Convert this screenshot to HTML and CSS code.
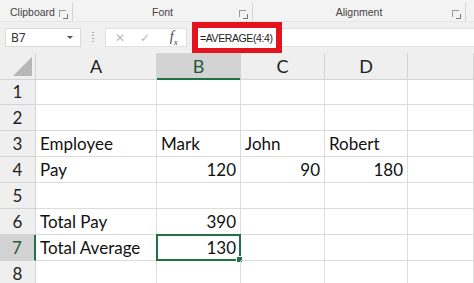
FILE: index.html
```html
<!DOCTYPE html>
<html lang="en">
<head>
    <meta charset="UTF-8">
    <title>Total Average</title>
    <link rel="stylesheet" href="styles.css">
</head>
<body>
    <div class="ribbon">
        <div class="group group-clipboard">Clipboard <span class="launcher"></span></div>
        <div class="group group-font">Font <span class="launcher"></span></div>
        <div class="group group-align">Alignment <span class="launcher"></span></div>
    </div>

    <div class="formula-bar">
        <div class="name-box">
            <span>B7</span>
            <span class="caret"></span>
        </div>
        <div class="grip"></div>
        <div class="fx-buttons">
            <span class="fx-btn">&#x2715;</span>
            <span class="fx-btn">&#x2713;</span>
            <span class="fx-btn fx">f<sub>x</sub></span>
        </div>
        <div class="formula-input">
            <span class="highlight">=AVERAGE(4:4)</span>
        </div>
    </div>

    <div class="sheet">
        <div class="corner"><span class="tri"></span></div>
        <div class="col-head">A</div>
        <div class="col-head active">B</div>
        <div class="col-head">C</div>
        <div class="col-head">D</div>
        <div class="col-head"></div>

        <div class="row-head">1</div>
        <div class="cell"></div><div class="cell"></div><div class="cell"></div><div class="cell"></div><div class="cell"></div>

        <div class="row-head">2</div>
        <div class="cell"></div><div class="cell"></div><div class="cell"></div><div class="cell"></div><div class="cell"></div>

        <div class="row-head">3</div>
        <div class="cell">Employee</div>
        <div class="cell">Mark</div>
        <div class="cell">John</div>
        <div class="cell">Robert</div>
        <div class="cell"></div>

        <div class="row-head">4</div>
        <div class="cell">Pay</div>
        <div class="cell num">120</div>
        <div class="cell num">90</div>
        <div class="cell num">180</div>
        <div class="cell"></div>

        <div class="row-head">5</div>
        <div class="cell"></div><div class="cell"></div><div class="cell"></div><div class="cell"></div><div class="cell"></div>

        <div class="row-head">6</div>
        <div class="cell">Total Pay</div>
        <div class="cell num">390</div>
        <div class="cell"></div><div class="cell"></div><div class="cell"></div>

        <div class="row-head active">7</div>
        <div class="cell">Total Average</div>
        <div class="cell num selected">130<span class="handle"></span></div>
        <div class="cell"></div><div class="cell"></div><div class="cell"></div>

        <div class="row-head">8</div>
        <div class="cell"></div><div class="cell"></div><div class="cell"></div><div class="cell"></div><div class="cell"></div>
    </div>
</body>
</html>
```

FILE: styles.css
```css
body {
    margin: 0;
    width: 474px;
    height: 283px;
    overflow: hidden;
    background-color: #fff;
    font-family: "Noto Sans", sans-serif;
}

/* ribbon group labels */
.ribbon {
    display: flex;
    height: 22px;
    padding-top: 3px;
    background-color: #f3f3f3;
    border-bottom: 1px solid #e6e6e6;
    box-sizing: border-box;
    font-family: "Liberation Sans", sans-serif;
    font-size: 10.5px;
    color: #444;
}

.group {
    position: relative;
    display: flex;
    align-items: center;
    justify-content: center;
    border-right: 1px solid #d4d4d4;
    box-sizing: border-box;
}

.group-clipboard {
    width: 73px;
    justify-content: flex-start;
    padding-left: 10px;
}

.group-font {
    width: 180px;
}

.group-align {
    width: 213px;
}

.launcher {
    position: absolute;
    right: 6px;
    top: 7px;
    width: 6px;
    height: 6px;
    border-left: 1px solid #999;
    border-top: 1px solid #999;
}

.launcher::after {
    content: "";
    position: absolute;
    right: -2px;
    bottom: -2px;
    width: 4px;
    height: 4px;
    border-right: 1px solid #777;
    border-bottom: 1px solid #777;
}

/* formula bar */
.formula-bar {
    display: flex;
    align-items: center;
    height: 31px;
    padding-left: 5px;
    background-color: #f0f0f0;
}

.name-box {
    display: flex;
    align-items: center;
    justify-content: space-between;
    width: 76px;
    height: 19px;
    padding: 0 5px;
    box-sizing: border-box;
    background-color: #fff;
    border: 1px solid #dadada;
    font-size: 12px;
    color: #333;
}

.caret {
    width: 0;
    height: 0;
    border-left: 3px solid transparent;
    border-right: 3px solid transparent;
    border-top: 3px solid #555;
    margin-right: 2px;
}

.grip {
    width: 2px;
    height: 11px;
    margin: 0 11px 0 11px;
    background: repeating-linear-gradient(#aaa 0 1px, transparent 1px 3px);
}

.fx-buttons {
    display: flex;
    align-items: center;
    width: 82px;
    height: 19px;
    padding-left: 2px;
    box-sizing: border-box;
    background-color: #fff;
    border: 1px solid #e0e0e0;
    color: #bbb;
    font-size: 12px;
}

.fx-btn {
    width: 26px;
    text-align: center;
}

.fx-btn.fx {
    margin-left: 4px;
    color: #444;
    font-family: "Liberation Serif", serif;
    font-style: italic;
    font-size: 14px;
}

.fx-btn sub {
    font-size: 9px;
}

.formula-input {
    flex: 1;
    display: flex;
    align-items: center;
    height: 19px;
    margin-left: 5px;
    background-color: #fff;
    border-top: 1px solid #e0e0e0;
    border-bottom: 1px solid #e0e0e0;
    box-sizing: border-box;
}

.highlight {
    display: flex;
    align-items: center;
    height: 20px;
    margin: -6px 0;
    padding: 0 3px 0 2px;
    background-color: #fff;
    border: 6px solid #e3141d;
    font-family: "Liberation Sans", sans-serif;
    font-size: 10.5px;
    letter-spacing: -0.4px;
    color: #222;
}

/* grid */
.sheet {
    display: grid;
    grid-template-columns: 36px 121px 84px 84px 83px 1fr;
    grid-auto-rows: 26px;
    font-family: Lato, "Open Sans", sans-serif;
    font-size: 17px;
    color: #111;
}

.corner,
.col-head,
.row-head {
    background-color: #efefef;
    border-right: 1px solid #d4d4d4;
    border-bottom: 1px solid #d4d4d4;
    box-sizing: border-box;
}

.corner {
    position: relative;
    height: 27px;
}

.tri {
    position: absolute;
    right: 3px;
    bottom: 3px;
    width: 0;
    height: 0;
    border-left: 19px solid transparent;
    border-bottom: 19px solid #b7b7b7;
}

.col-head {
    height: 27px;
    display: flex;
    align-items: center;
    justify-content: center;
    font-size: 18px;
    color: #222;
}

.col-head.active {
    background-color: #d3d3d3;
    border-bottom: 2px solid #217346;
    color: #1e5c3b;
}

.row-head {
    display: flex;
    align-items: center;
    justify-content: center;
    font-size: 17px;
    color: #222;
}

.row-head.active {
    background-color: #d3d3d3;
    border-right: 2px solid #217346;
    color: #1e5c3b;
}

.cell {
    position: relative;
    display: flex;
    align-items: center;
    padding: 0 4px;
    border-right: 1px solid #dcdcdc;
    border-bottom: 1px solid #dcdcdc;
    box-sizing: border-box;
    white-space: nowrap;
}

.cell.num {
    justify-content: flex-end;
}

.cell.selected {
    border: 2px solid #217346;
    margin: -1px 0 0 -1px;
    padding-right: 3px;
}

.handle {
    position: absolute;
    right: -4px;
    bottom: -4px;
    width: 5px;
    height: 5px;
    background-color: #217346;
    border: 1px solid #fff;
}
```
